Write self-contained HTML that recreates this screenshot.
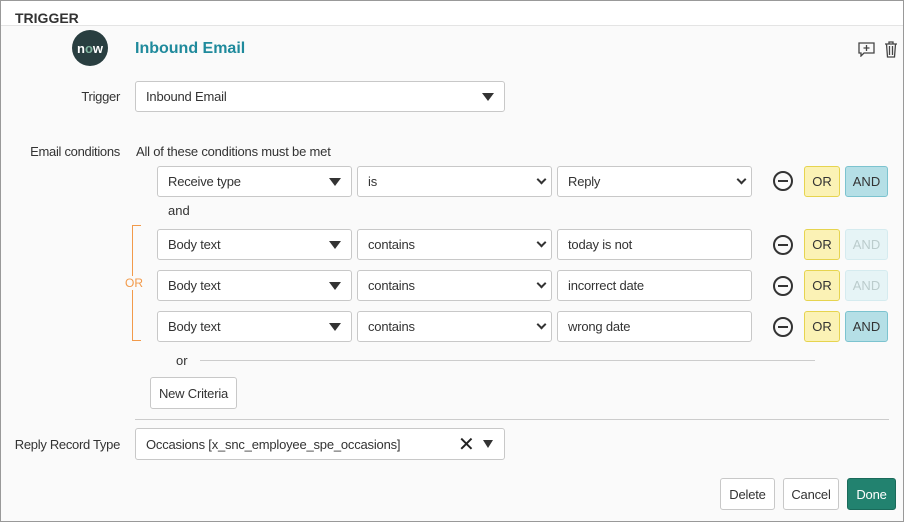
<!DOCTYPE html>
<html><head><style>
*{box-sizing:border-box;margin:0;padding:0}
body{width:904px;height:522px;overflow:hidden;font-family:"Liberation Sans",sans-serif;color:#333;background:#fafafa;position:relative;font-size:13px}
.a{position:absolute}
.lbl{position:absolute;right:784px;white-space:nowrap;letter-spacing:-0.3px}
.box{position:absolute;background:#fff;border:1px solid #c8c8c8;border-radius:3px;display:flex;align-items:center;padding-left:10px;font-size:13px;color:#333;letter-spacing:-0.2px}
.tri{position:absolute;width:0;height:0;border-left:6px solid transparent;border-right:6px solid transparent;border-top:8px solid #333}
.chev{position:absolute;width:7px;height:7px;border-right:2px solid #333;border-bottom:2px solid #333;transform:rotate(45deg)}
.minus{position:absolute;width:20px;height:20px;border:2px solid #333;border-radius:50%}
.minus:after{content:"";position:absolute;left:3px;right:3px;top:7px;height:2px;background:#333}
.or{position:absolute;width:36px;height:31px;background:#fbf2b5;border:1px solid #e6d44f;border-radius:3px;display:flex;align-items:center;justify-content:center;font-size:13px}
.and{position:absolute;width:43px;height:31px;background:#b5dfe6;border:1px solid #7cc3cf;border-radius:3px;display:flex;align-items:center;justify-content:center;font-size:13px}
.and.dis{background:#e6f4f6;border-color:#d5ebef;color:#bcc}
.btn{position:absolute;background:#fff;border:1px solid #c8c8c8;border-radius:3px;display:flex;align-items:center;justify-content:center;font-size:13px;letter-spacing:-0.2px}
</style></head><body>
<div class="a" style="left:0;top:0;width:904px;height:26px;background:#fff;border-bottom:1px solid #e4e4e4"></div>
<div class="a" style="left:0;top:0;width:904px;height:522px;border:1px solid #999;z-index:5"></div>
<div class="a" style="left:15px;top:10px;font-weight:bold;font-size:14px;color:#333">TRIGGER</div>
<div class="a" style="left:72px;top:30px;width:36px;height:36px;border-radius:50%;background:#293e40;color:#fff;font-weight:bold;font-size:13px;display:flex;align-items:center;justify-content:center">n<span style="color:#81b5a1">o</span>w</div>
<div class="a" style="left:135px;top:40px;font-size:16px;font-weight:bold;color:#1f8a9c">Inbound Email</div>
<svg class="a" style="left:858px;top:42px" width="17" height="15" viewBox="0 0 17 15"><path d="M1 1h15v10H6l-3 3v-3H1z" fill="none" stroke="#444" stroke-width="1.3"/><path d="M8.5 3v6M5.5 6h6" stroke="#444" stroke-width="1.3"/></svg>
<svg class="a" style="left:884px;top:41px" width="14" height="17" viewBox="0 0 14 17"><path d="M1 3h12M5 3V1h4v2M2.5 3l1 13h7l1-13M5.5 5v9M8.5 5v9" fill="none" stroke="#444" stroke-width="1.3"/></svg>

<div class="lbl" style="top:89px">Trigger</div>
<div class="box" style="left:135px;top:81px;width:370px;height:31px">Inbound Email</div>
<div class="tri" style="left:482px;top:93px"></div>

<div class="lbl" style="top:144px">Email conditions</div>
<div class="a" style="left:136px;top:144px;letter-spacing:-0.2px">All of these conditions must be met</div>

<div class="box" style="left:157px;top:166px;width:195px;height:31px">Receive type</div><div class="tri" style="left:329px;top:178px"></div>
<div class="box" style="left:357px;top:166px;width:195px;height:31px">is</div><div class="chev" style="left:538px;top:176px"></div>
<div class="box" style="left:557px;top:166px;width:195px;height:31px">Reply</div><div class="chev" style="left:738px;top:176px"></div>
<div class="minus" style="left:773px;top:171px"></div><div class="or" style="left:804px;top:166px">OR</div><div class="and" style="left:845px;top:166px">AND</div>
<div class="a" style="left:168px;top:203px">and</div>

<div class="a" style="left:132px;top:225px;width:9px;height:116px;border:1.5px solid #f29a4a;border-right:none"></div>
<div class="a" style="left:123px;top:276px;background:#fafafa;color:#f29a4a;font-size:12px;padding:0 2px">OR</div>

<div class="box" style="left:157px;top:229px;width:195px;height:31px">Body text</div><div class="tri" style="left:329px;top:241px"></div>
<div class="box" style="left:357px;top:229px;width:195px;height:31px">contains</div><div class="chev" style="left:538px;top:239px"></div>
<div class="box" style="left:557px;top:229px;width:195px;height:31px">today is not</div>
<div class="minus" style="left:773px;top:235px"></div><div class="or" style="left:804px;top:229px">OR</div><div class="and dis" style="left:845px;top:229px">AND</div>

<div class="box" style="left:157px;top:270px;width:195px;height:31px">Body text</div><div class="tri" style="left:329px;top:282px"></div>
<div class="box" style="left:357px;top:270px;width:195px;height:31px">contains</div><div class="chev" style="left:538px;top:280px"></div>
<div class="box" style="left:557px;top:270px;width:195px;height:31px">incorrect date</div>
<div class="minus" style="left:773px;top:276px"></div><div class="or" style="left:804px;top:270px">OR</div><div class="and dis" style="left:845px;top:270px">AND</div>

<div class="box" style="left:157px;top:311px;width:195px;height:31px">Body text</div><div class="tri" style="left:329px;top:323px"></div>
<div class="box" style="left:357px;top:311px;width:195px;height:31px">contains</div><div class="chev" style="left:538px;top:321px"></div>
<div class="box" style="left:557px;top:311px;width:195px;height:31px">wrong date</div>
<div class="minus" style="left:773px;top:317px"></div><div class="or" style="left:804px;top:311px">OR</div><div class="and" style="left:845px;top:311px">AND</div>

<div class="a" style="left:176px;top:353px">or</div>
<div class="a" style="left:200px;top:360px;width:615px;height:1px;background:#ccc"></div>
<div class="btn" style="left:150px;top:377px;width:87px;height:32px">New Criteria</div>
<div class="a" style="left:135px;top:419px;width:754px;height:1px;background:#ccc"></div>

<div class="lbl" style="top:437px">Reply Record Type</div>
<div class="box" style="left:135px;top:428px;width:370px;height:32px">Occasions [x_snc_employee_spe_occasions]</div>
<div class="a" style="left:458px;top:432px;font-size:20px;color:#222">✕</div>
<div class="tri" style="left:483px;top:440px;border-left-width:5px;border-right-width:5px;border-top-width:8px"></div>

<div class="btn" style="left:720px;top:478px;width:55px;height:32px">Delete</div>
<div class="btn" style="left:783px;top:478px;width:56px;height:32px">Cancel</div>
<div class="btn" style="left:847px;top:478px;width:49px;height:32px;background:#22826f;border-color:#1a6a5a;color:#fff">Done</div>
</body></html>
